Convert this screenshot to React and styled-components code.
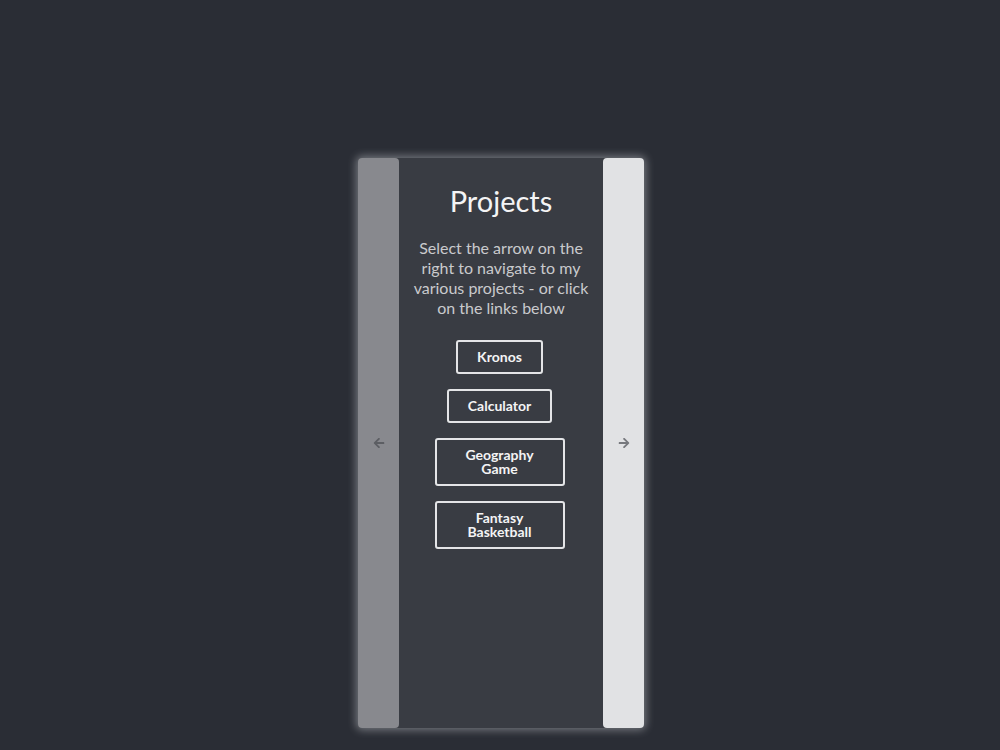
import React from "react";
import styled, { createGlobalStyle } from "styled-components";
import { FaArrowLeft, FaArrowRight } from "react-icons/fa";

const GlobalStyle = createGlobalStyle`
  html, body {
    margin: 0;
    padding: 0;
    background: #2a2d35;
    font-family: Lato, "Open Sans", sans-serif;
  }
`;

const Page = styled.div`
  display: flex;
  justify-content: center;
  padding: 158px 0 0 2px;
  min-height: 750px;
  box-sizing: border-box;
`;

const Card = styled.div`
  display: flex;
  width: 286px;
  height: 570px;
  border-radius: 4px;
  background: #393c43;
  box-shadow: 0 0 8px 2px rgba(210, 212, 218, 0.45);
`;

const SideButton = styled.button`
  display: flex;
  align-items: center;
  justify-content: center;
  width: 41px;
  flex: none;
  border: none;
  border-radius: 4px;
  padding: 0;
  cursor: pointer;
  background: ${(props) => (props.$light ? "#e1e2e4" : "#88898e")};
  color: ${(props) => (props.$light ? "#76787d" : "#5c5e63")};
`;

const Content = styled.div`
  flex: 1;
  display: flex;
  flex-direction: column;
  align-items: center;
  padding: 26px 10px 0;
  box-shadow: 0 -1px 0 #595c63, 0 1px 0 #595c63;
`;

const Title = styled.h1`
  margin: 0;
  font-size: 29px;
  line-height: 34px;
  font-weight: 400;
  color: #f4f4f5;
`;

const Intro = styled.p`
  margin: 20px 0 0;
  font-size: 16px;
  line-height: 20px;
  text-align: center;
  color: #c9cacd;
`;

const Links = styled.div`
  display: flex;
  flex-direction: column;
  align-items: center;
  gap: 15px;
  margin-top: 22px;
  padding-right: 3px;
`;

const LinkButton = styled.a`
  display: inline-block;
  box-sizing: border-box;
  max-width: 130px;
  padding: 8px 19px;
  border: 2px solid #e4e5e7;
  border-radius: 3px;
  font-size: 14px;
  font-weight: 700;
  line-height: 14px;
  text-align: center;
  color: #f4f4f5;
  text-decoration: none;
  cursor: pointer;
`;

const projects = ["Kronos", "Calculator", "Geography Game", "Fantasy Basketball"];

export default function App() {
  return (
    <>
      <GlobalStyle />
      <Page>
        <Card>
          <SideButton aria-label="Previous">
            <FaArrowLeft size={12} />
          </SideButton>
          <Content>
            <Title>Projects</Title>
            <Intro>
              Select the arrow on the right to navigate to my various projects - or click on the links below
            </Intro>
            <Links>
              {projects.map((name) => (
                <LinkButton key={name}>{name}</LinkButton>
              ))}
            </Links>
          </Content>
          <SideButton $light aria-label="Next">
            <FaArrowRight size={12} />
          </SideButton>
        </Card>
      </Page>
    </>
  );
}
